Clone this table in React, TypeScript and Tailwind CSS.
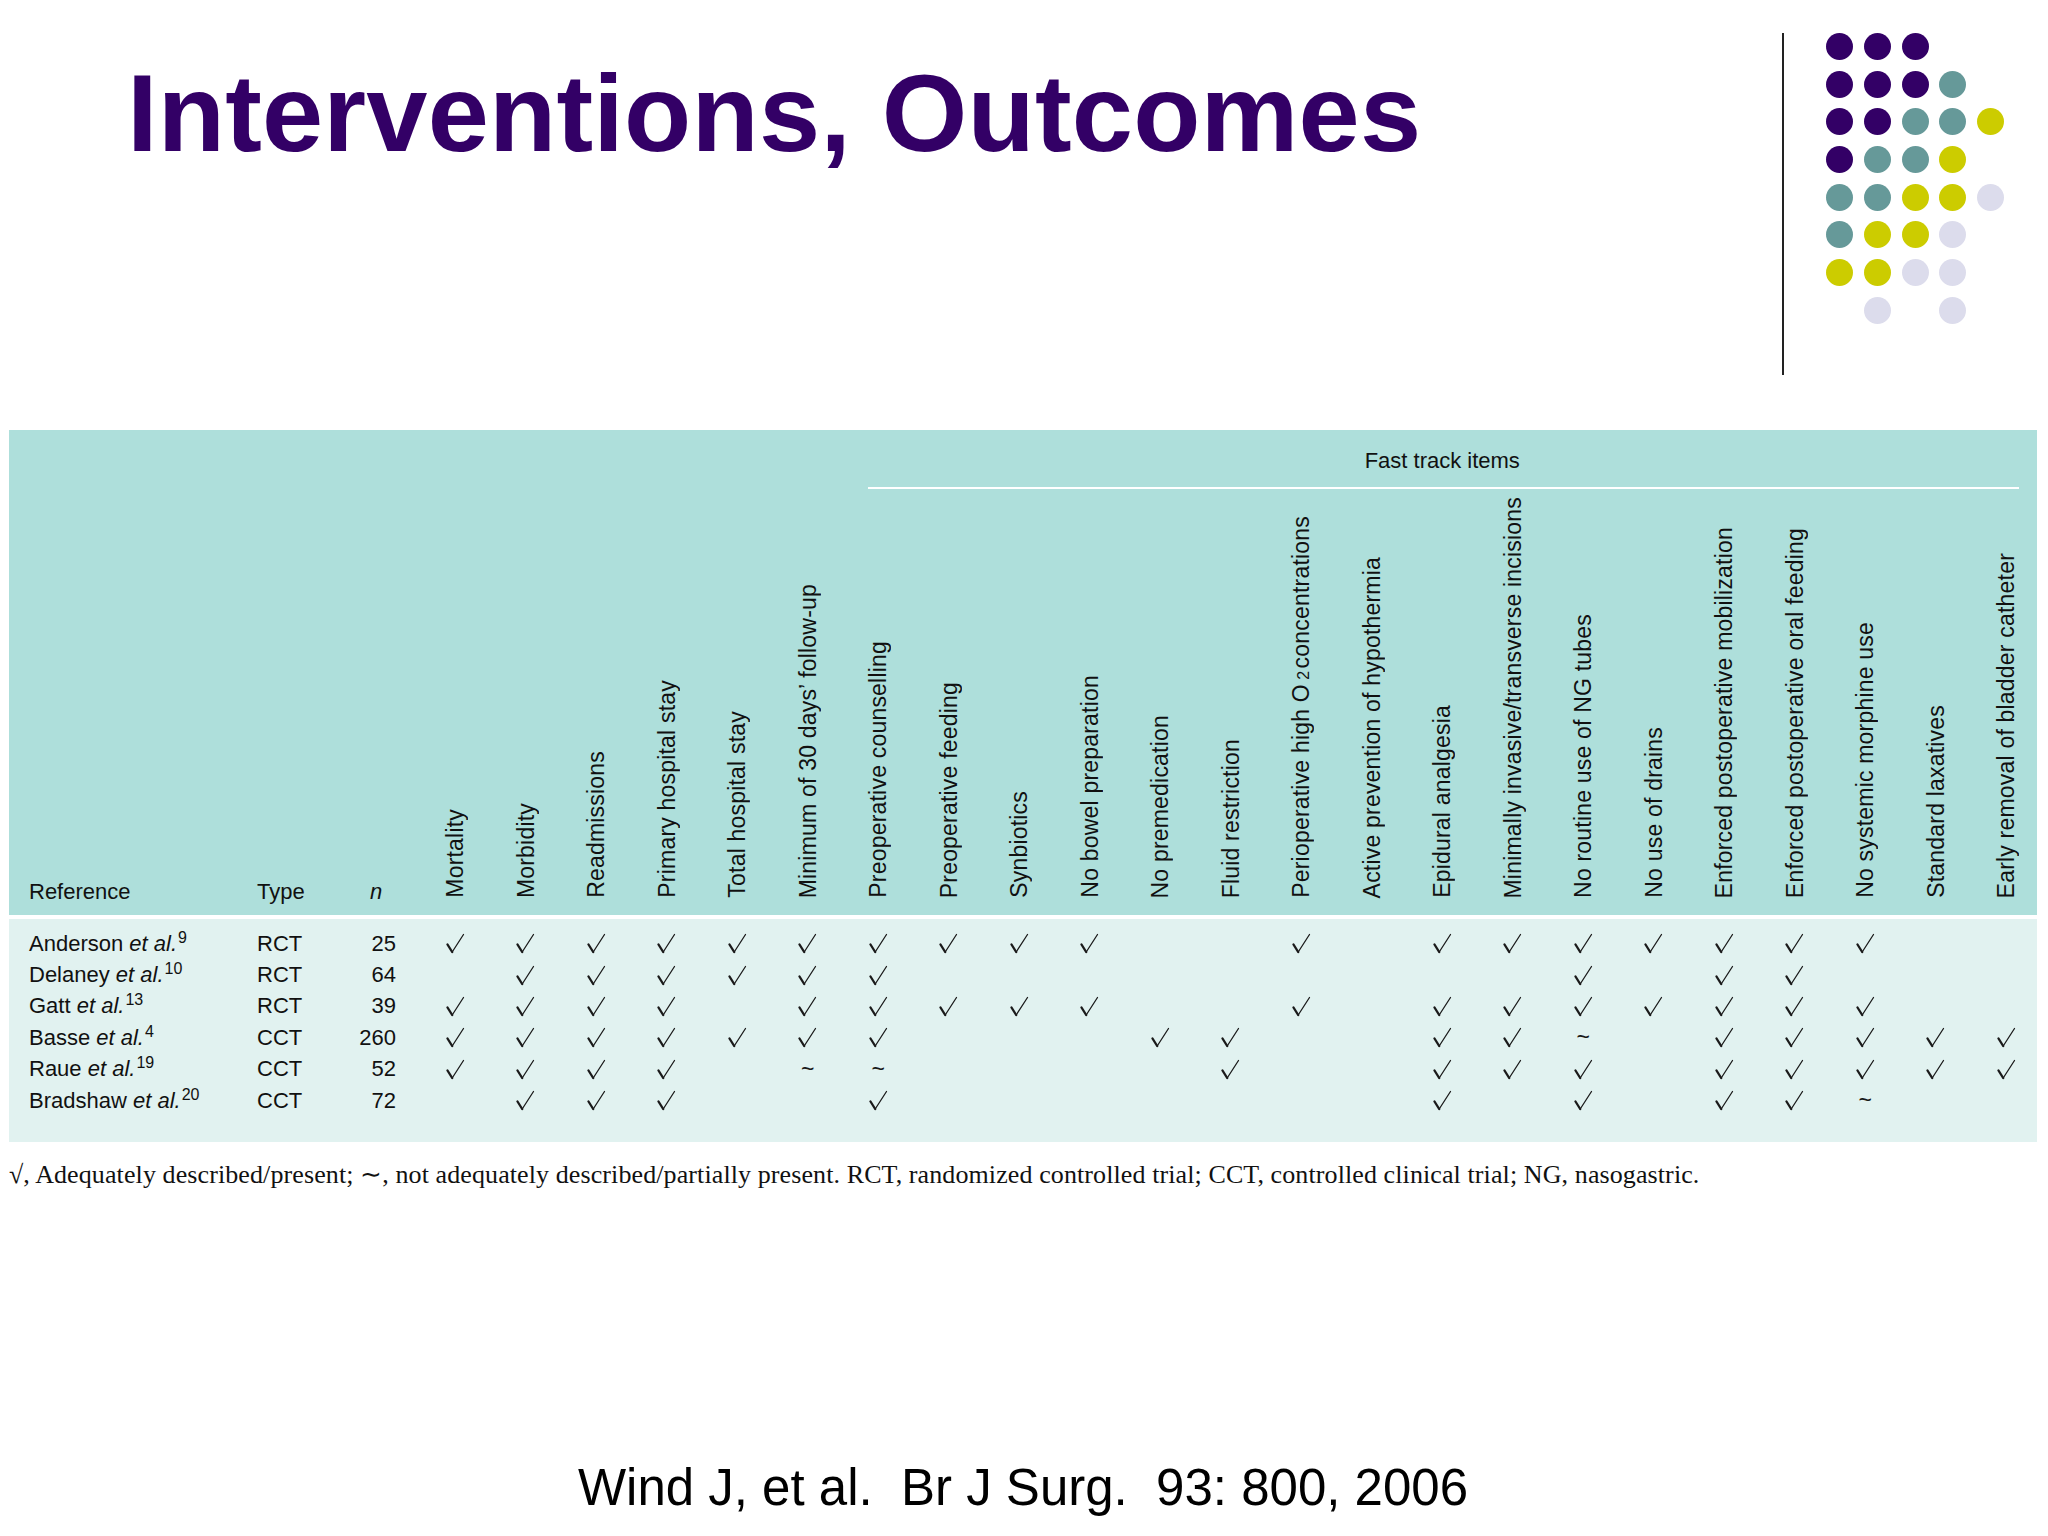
import React from "react";

const PURPLE = "bg-[#330066]";
const TEAL = "bg-[#669999]";
const YELLOW = "bg-[#cccc00]";
const LAV = "bg-[#dcdcec]";

// logo dot grid, row by row (null = gap)
const dots: (string | null)[][] = [
  [PURPLE, PURPLE, PURPLE, null, null],
  [PURPLE, PURPLE, PURPLE, TEAL, null],
  [PURPLE, PURPLE, TEAL, TEAL, YELLOW],
  [PURPLE, TEAL, TEAL, YELLOW, null],
  [TEAL, TEAL, YELLOW, YELLOW, LAV],
  [TEAL, YELLOW, YELLOW, LAV, null],
  [YELLOW, YELLOW, LAV, LAV, null],
  [null, LAV, null, LAV, null],
];

const columns: React.ReactNode[] = [
  "Mortality",
  "Morbidity",
  "Readmissions",
  "Primary hospital stay",
  "Total hospital stay",
  "Minimum of 30 days’ follow-up",
  "Preoperative counselling",
  "Preoperative feeding",
  "Synbiotics",
  "No bowel preparation",
  "No premedication",
  "Fluid restriction",
  <>
    Perioperative high O<sub className="text-[16px] align-[-3px]">2</sub> concentrations
  </>,
  "Active prevention of hypothermia",
  "Epidural analgesia",
  "Minimally invasive/transverse incisions",
  "No routine use of NG tubes",
  "No use of drains",
  "Enforced postoperative mobilization",
  "Enforced postoperative oral feeding",
  "No systemic morphine use",
  "Standard laxatives",
  "Early removal of bladder catheter",
];

// x = adequately described, ~ = partially, . = nothing
const rows = [
  { name: "Anderson", sup: "9", type: "RCT", n: "25", marks: "xxxxxxxxxx..x.xxxxxxx.." },
  { name: "Delaney", sup: "10", type: "RCT", n: "64", marks: ".xxxxxx.........x.xx..." },
  { name: "Gatt", sup: "13", type: "RCT", n: "39", marks: "xxxx.xxxxx..x.xxxxxxx.." },
  { name: "Basse", sup: "4", type: "CCT", n: "260", marks: "xxxxxxx...xx..xx~.xxxxx" },
  { name: "Raue", sup: "19", type: "CCT", n: "52", marks: "xxxx.~~....x..xxx.xxxxx" },
  { name: "Bradshaw", sup: "20", type: "CCT", n: "72", marks: ".xxx..x.......x.x.xx~.." },
];

const gridCols = "grid grid-cols-[228px_100px_39px_24px_repeat(23,70.5px)]";

function Check() {
  return (
    <svg width="19" height="21" viewBox="0 0 19 21" fill="none">
      <path d="M1.5 11.5 L6.2 19" stroke="#1a1a1a" strokeWidth="2.3" strokeLinecap="round" />
      <path d="M6.2 19 L17.5 1.5" stroke="#1a1a1a" strokeWidth="1.3" strokeLinecap="round" />
    </svg>
  );
}

function Mark({ m }: { m: string }) {
  if (m === "x") return <Check />;
  if (m === "~") return <span className="text-[23px] leading-none text-[#1a1a1a]">~</span>;
  return null;
}

export default function App() {
  return (
    <div className="w-[2048px] h-[1536px] bg-white flex flex-col font-['Liberation_Sans',Arial,sans-serif] text-[#111]">
      {/* title + logo */}
      <div className="flex h-[430px] shrink-0">
        <div className="flex-1 pl-[127px] pt-[58px]">
          <h1 className="text-[110px] leading-none font-bold text-[#330066] tracking-[0.2px]">Interventions, Outcomes</h1>
        </div>
        <div className="flex items-start pt-[33px] pr-[44px]">
          <div className="w-[2px] h-[342px] bg-[#222]" />
          <div className="ml-[42px] grid grid-cols-[repeat(5,27px)] gap-[10.7px]">
            {dots.flat().map((c, i) => (
              <div key={i} className={`w-[27px] h-[27px] rounded-full ${c ?? ""}`} />
            ))}
          </div>
        </div>
      </div>

      {/* table */}
      <div className="ml-[9px] w-[2028px] shrink-0">
        <div className="h-[485px] bg-[#aedfdb] flex flex-col pl-[20px]">
          <div className={`${gridCols} pt-[18px]`}>
            <div className="col-[11/28] flex flex-col">
              <div className="text-center text-[22px] leading-[26px]">Fast track items</div>
              <div className="mt-[13px] ml-[25px] mr-[23px] h-[2px] bg-white" />
            </div>
          </div>
          <div className={`${gridCols} flex-1 items-end pb-[17px]`}>
            <div className="text-[22px] leading-[26px] mb-[-7px]">Reference</div>
            <div className="text-[22px] leading-[26px] mb-[-7px]">Type</div>
            <div className="text-[22px] leading-[26px] mb-[-7px] pl-[13px] italic">n</div>
            <div />
            {columns.map((c, i) => (
              <div key={i} className="flex justify-center">
                <div className="[writing-mode:vertical-rl] rotate-180 text-[23px] leading-[26px] tracking-[0.2px] whitespace-nowrap">
                  {c}
                </div>
              </div>
            ))}
          </div>
        </div>
        <div className="h-[4px]" />
        <div className="h-[223px] bg-[#e1f2f0] pl-[20px] pt-[9px]">
          {rows.map((r) => (
            <div key={r.name} className={`${gridCols} h-[31.4px] items-center text-[22px] leading-[26px]`}>
              <div className="whitespace-nowrap">
                {r.name} <i>et al.</i>
                <sup className="text-[16px] ml-[1px]">{r.sup}</sup>
              </div>
              <div>{r.type}</div>
              <div className="text-right">{r.n}</div>
              <div />
              {r.marks.split("").map((m, i) => (
                <div key={i} className="flex justify-center items-center h-[31.4px]">
                  <Mark m={m} />
                </div>
              ))}
            </div>
          ))}
        </div>
      </div>

      {/* footnote */}
      <p className="ml-[9px] mt-[18px] font-['Liberation_Serif','Times_New_Roman',serif] text-[26px] leading-[30px] tracking-[0.1px] text-[#111] whitespace-nowrap">
        √, Adequately described/present; ∼, not adequately described/partially present. RCT, randomized controlled
        trial; CCT, controlled clinical trial; NG, nasogastric.
      </p>

      {/* citation */}
      <div className="mt-auto pb-[23px] flex justify-center pr-[2px]">
        <p className="text-[51px] leading-none text-black whitespace-pre">Wind J, et al.  Br J Surg.  93: 800, 2006</p>
      </div>
    </div>
  );
}
